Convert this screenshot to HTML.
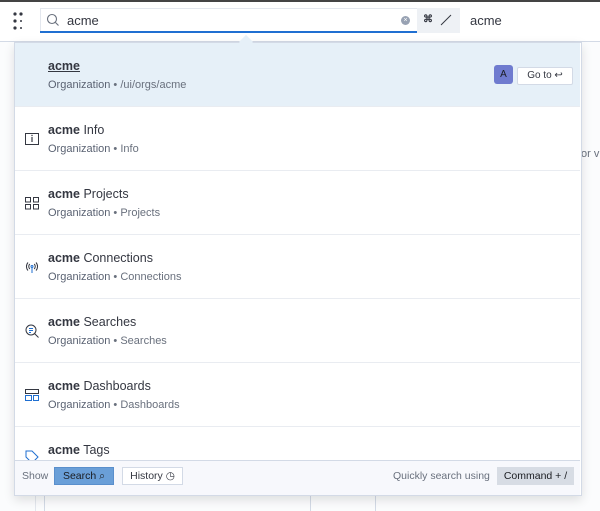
<!DOCTYPE html><html><head><style>
body{margin:0;width:600px;height:511px;overflow:hidden;background:#fff;font-family:"Liberation Sans",sans-serif;position:relative;color:#343741}
.abs{position:absolute;white-space:nowrap}
.row{position:absolute;left:15px;width:565px;height:63px;border-bottom:1px solid #e9ecf1;background:#fff}
.t{position:absolute;left:33px;top:16px;font-size:12.5px;color:#343741}
.t b{font-weight:bold}
.s{position:absolute;left:33px;top:36px;font-size:11px;color:#69707d}
.s b{color:#5a6272;font-weight:normal}
.ic{position:absolute;left:9px;top:24px;width:16px;height:16px}
</style></head><body>
<div class="abs" style="left:0;top:0;width:600px;height:2px;background:#444"></div>
<div class="abs" style="left:0;top:41px;width:600px;height:1px;background:#d3dae6"></div>
<div class="abs" style="left:0;top:42px;width:600px;height:469px;background:#fbfcfd"></div>
<div class="abs" style="left:35px;top:42px;width:1px;height:469px;background:#e3e7ee"></div>
<div class="abs" style="left:44px;top:494px;width:1px;height:17px;background:#d3dae6"></div>
<div class="abs" style="left:310px;top:494px;width:1px;height:17px;background:#d3dae6"></div>
<div class="abs" style="left:375px;top:494px;width:1px;height:17px;background:#d3dae6"></div>
<div class="abs" style="left:581px;top:148px;font-size:11px;color:#69707d">or vi</div>
<svg class="abs" style="left:12px;top:12px" width="14" height="18"><g fill="#343741"><circle cx="3" cy="2" r="1.6"/><circle cx="9" cy="2" r="1.6"/><circle cx="3" cy="9" r="1.6"/><circle cx="9" cy="9" r="1"/><circle cx="3" cy="16" r="1.6"/><circle cx="9" cy="16" r="1"/></g></svg>
<div class="abs" style="left:40px;top:8px;width:420px;height:25px;background:#fff;border:1px solid #e3e7ee;box-sizing:border-box"></div>
<div class="abs" style="left:417px;top:8px;width:43px;height:25px;background:#eef1f5"></div>
<div class="abs" style="left:40px;top:31px;width:377px;height:2px;background:#1f6fd1"></div>
<svg class="abs" style="left:46px;top:13px" width="14" height="14"><circle cx="6" cy="6" r="4.5" fill="none" stroke="#69707d" stroke-width="1.1"/><path d="M9.5 9.5l3 3" stroke="#69707d" stroke-width="1.1"/></svg>
<div class="abs" style="left:67px;top:13px;font-size:13px;color:#343741">acme</div>
<div class="abs" style="left:401px;top:16px;width:9px;height:9px;border-radius:50%;background:#98a2b3;color:#fff;font-size:7px;line-height:9px;text-align:center">×</div>
<div class="abs" style="left:423px;top:14px;font-size:10px;font-weight:bold">⌘</div>
<svg class="abs" style="left:440px;top:14px" width="12" height="12"><path d="M1 11L11 1" stroke="#343741" stroke-width="1"/></svg>
<div class="abs" style="left:470px;top:13px;font-size:13px">acme</div>
<div class="abs" style="left:14px;top:42px;width:566px;height:452px;background:#fff;border:1px solid #d3dae6;box-shadow:0 4px 10px rgba(0,0,0,.12);overflow:hidden"></div>
<div class="abs" style="left:241px;top:37px;width:10px;height:10px;background:#e6f0f8;transform:rotate(45deg)"></div>
<div class="row" style="top:43px;background:#e6f0f8">
 <div class="t" style="top:16px"><b style="text-decoration:underline">acme</b></div>
 <div class="s"><b>Organization</b> • /ui/orgs/acme</div>
 <div class="abs" style="left:479px;top:22px;width:19px;height:19px;background:#6f7bcf;border-radius:3px;color:#1a1c21;font-size:10px;line-height:19px;text-align:center">A</div>
 <div class="abs" style="left:502px;top:24px;width:54px;height:16px;background:#fff;border:1px solid #d3dae6;border-radius:2px;font-size:10px;line-height:16px;text-align:center">Go to ↩</div>
</div>
<div class="row" style="top:107px"><svg class="ic" viewBox="0 0 16 16"><rect x="1.5" y="2.5" width="13" height="11" fill="none" stroke="#343741"/><path d="M8 6v5" stroke="#343741" stroke-width="1.2"/><circle cx="8" cy="4.5" r=".7" fill="#343741"/></svg><div class="t"><b>acme</b> Info</div><div class="s"><b>Organization</b> • Info</div></div>
<div class="row" style="top:171px"><svg class="ic" viewBox="0 0 16 16"><g fill="none" stroke="#343741"><rect x="1.5" y="2.5" width="5" height="4.5"/><rect x="9.5" y="2.5" width="5" height="4.5"/><rect x="1.5" y="9.5" width="5" height="4.5"/><rect x="9.5" y="9.5" width="5" height="4.5"/></g></svg><div class="t"><b>acme</b> Projects</div><div class="s"><b>Organization</b> • Projects</div></div>
<div class="row" style="top:235px"><svg class="ic" viewBox="0 0 16 16"><g fill="none" stroke="#343741"><path d="M4 3.5a6 6 0 000 8M12 3.5a6 6 0 010 8M5.8 5a3.5 3.5 0 000 5M10.2 5a3.5 3.5 0 010 5"/><circle cx="8" cy="7.5" r="1" stroke="#1f6fd1"/><path d="M8 9v5" stroke="#1f6fd1"/></g></svg><div class="t"><b>acme</b> Connections</div><div class="s"><b>Organization</b> • Connections</div></div>
<div class="row" style="top:299px"><svg class="ic" viewBox="0 0 16 16"><g fill="none" stroke="#343741"><circle cx="7" cy="7" r="5"/><path d="M10.5 10.5l4 4"/><path d="M5 5.5h4M5 7.5h4M5 9.5h2" stroke="#1f6fd1"/></g></svg><div class="t"><b>acme</b> Searches</div><div class="s"><b>Organization</b> • Searches</div></div>
<div class="row" style="top:363px"><svg class="ic" viewBox="0 0 16 16"><g fill="none" stroke="#343741"><rect x="1.5" y="2.5" width="13" height="4"/><rect x="1.5" y="8.5" width="6" height="5" stroke="#1f6fd1"/><rect x="9.5" y="8.5" width="5" height="5" stroke="#1f6fd1"/></g></svg><div class="t"><b>acme</b> Dashboards</div><div class="s"><b>Organization</b> • Dashboards</div></div>
<div class="row" style="top:427px;height:33px;border:0;overflow:hidden"><svg class="ic" viewBox="0 0 16 16" style="top:22px"><path d="M2 2h6l6 6-6 6-6-6z" fill="none" stroke="#1f6fd1"/></svg><div class="t"><b>acme</b> Tags</div></div>
<div class="abs" style="left:15px;top:460px;width:565px;height:34px;background:#f7f8fc;border-top:1px solid #d3dae6"></div>
<div class="abs" style="left:22px;top:470px;font-size:10.5px;color:#69707d">Show</div>
<div class="abs" style="left:54px;top:467px;width:60px;height:18px;background:#6a9fd8;border:1px solid #5a8fcc;box-sizing:border-box;font-size:10.5px;line-height:16px;text-align:center;color:#1a1c21">Search ⌕</div>
<div class="abs" style="left:122px;top:467px;width:61px;height:18px;background:#fff;border:1px solid #d3dae6;box-sizing:border-box;font-size:10.5px;line-height:16px;text-align:center">History ◷</div>
<div class="abs" style="left:393px;top:470px;font-size:10.5px;color:#69707d">Quickly search using</div>
<div class="abs" style="left:497px;top:467px;width:77px;height:18px;background:#d7dce4;font-size:10.5px;line-height:18px;text-align:center;color:#1a1c21">Command + /</div>
</body></html>
